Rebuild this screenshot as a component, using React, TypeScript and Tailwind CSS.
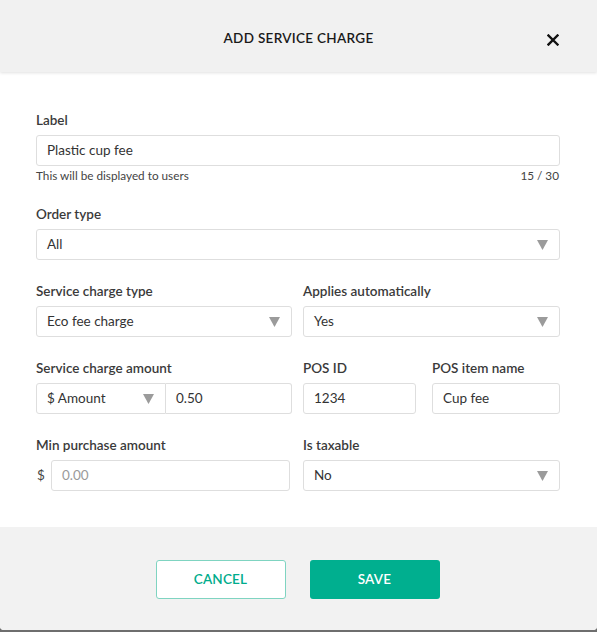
import type { ReactNode } from "react"

const font = { fontFamily: "Lato, 'Noto Sans', sans-serif" }

function Caret() {
  return (
    <svg width="11" height="10" viewBox="0 0 11 10" className="shrink-0">
      <path d="M0 0 H11 L5.5 10 Z" fill="#9b9b9b" />
    </svg>
  )
}

function FieldLabel({ children }: { children: ReactNode }) {
  return <div className="text-[13.5px] leading-4 font-semibold text-[#3a3a3a] mb-[7px]">{children}</div>
}

function TextBox({ value, placeholder, className = "" }: { value?: string; placeholder?: boolean; className?: string }) {
  return (
    <div
      className={`h-[31px] border border-[#dedede] rounded-[3px] bg-white flex items-center px-[10px] text-[13.5px] ${
        placeholder ? "text-[#9a9a9a]" : "text-[#333]"
      } ${className}`}
    >
      {value}
    </div>
  )
}

function SelectBox({ value, className = "" }: { value: string; className?: string }) {
  return (
    <div
      className={`h-[31px] border border-[#dedede] rounded-[3px] bg-white flex items-center justify-between pl-[10px] pr-[11px] text-[13.5px] text-[#333] ${className}`}
    >
      <span>{value}</span>
      <Caret />
    </div>
  )
}

export default function App() {
  return (
    <div className="w-[597px] h-[632px] bg-[#6e6e6e]" style={font}>
      <div className="h-[630px] flex flex-col rounded-b-[4px] overflow-hidden bg-white">
        {/* header */}
        <div className="relative z-10 h-[72px] shrink-0 bg-[#f1f1f1] flex items-center justify-center shadow-[0_1px_3px_rgba(0,0,0,0.12)]">
          <span className="text-[13.5px] font-semibold text-[#1a1a1a] tracking-[0.3px] mt-[4px]">ADD SERVICE CHARGE</span>
          <button className="absolute right-[38px] top-[34px] p-0">
            <svg width="12" height="12" viewBox="0 0 12 12">
              <path d="M1.5 1.5 L10.5 10.5 M10.5 1.5 L1.5 10.5" stroke="#111" strokeWidth="2.4" strokeLinecap="square" />
            </svg>
          </button>
        </div>

        {/* body */}
        <div className="flex-1 pl-[36px] pr-[37px] pt-[40px] pb-[36px] bg-white">
          <FieldLabel>Label</FieldLabel>
          <TextBox value="Plastic cup fee" />
          <div className="flex justify-between text-[11.75px] leading-4 text-[#444] mt-[2px]">
            <span>This will be displayed to users</span>
            <span className="pr-[1px]">15 / 30</span>
          </div>

          <div className="mt-[22px]">
            <FieldLabel>Order type</FieldLabel>
            <SelectBox value="All" />
          </div>

          <div className="mt-[23px] grid grid-cols-[256px_1fr] gap-x-[11px]">
            <div>
              <FieldLabel>Service charge type</FieldLabel>
              <SelectBox value="Eco fee charge" />
            </div>
            <div>
              <FieldLabel>Applies automatically</FieldLabel>
              <SelectBox value="Yes" />
            </div>
          </div>

          <div className="mt-[23px] grid grid-cols-[256px_1fr] gap-x-[11px]">
            <div>
              <FieldLabel>Service charge amount</FieldLabel>
              <div className="flex">
                <SelectBox value="$ Amount" className="w-[130px] rounded-r-none" />
                <TextBox value="0.50" className="flex-1 border-l-0 rounded-l-none" />
              </div>
            </div>
            <div className="flex gap-[16px]">
              <div className="w-[113px]">
                <FieldLabel>POS ID</FieldLabel>
                <TextBox value="1234" />
              </div>
              <div className="flex-1">
                <FieldLabel>POS item name</FieldLabel>
                <TextBox value="Cup fee" />
              </div>
            </div>
          </div>

          <div className="mt-[23px] grid grid-cols-[256px_1fr] gap-x-[11px]">
            <div>
              <FieldLabel>Min purchase amount</FieldLabel>
              <div className="flex items-center pr-[2px]">
                <span className="text-[13.5px] text-[#444] w-[15px] pl-[1px]">$</span>
                <TextBox value="0.00" placeholder className="flex-1" />
              </div>
            </div>
            <div>
              <FieldLabel>Is taxable</FieldLabel>
              <SelectBox value="No" />
            </div>
          </div>
        </div>

        {/* footer */}
        <div className="h-[103px] shrink-0 bg-[#f2f2f2] flex items-center justify-center gap-[24px] pt-[1px] pr-[2px]">
          <button className="w-[130px] h-[39px] rounded-[3px] border border-[#7fd4c1] bg-white text-[#00ac8c] text-[13.5px] font-semibold tracking-[0.2px]">
            CANCEL
          </button>
          <button className="w-[130px] h-[39px] rounded-[3px] bg-[#00af8f] text-white text-[13.5px] font-semibold tracking-[0.2px]">
            SAVE
          </button>
        </div>
      </div>
    </div>
  )
}
